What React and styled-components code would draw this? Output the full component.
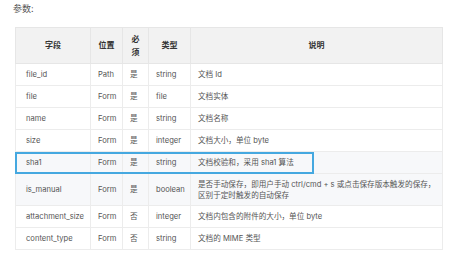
import React from 'react';
import styled, { createGlobalStyle } from 'styled-components';

const GlobalStyle = createGlobalStyle`
    body {
        margin: 0;
        background: #fff;
        font-family: "Inter", "Noto Sans CJK SC", sans-serif;
    }
`;

const Page = styled.div`
    padding: 3px 0 0 13px;
    width: 474px;
    height: 261px;
    box-sizing: border-box;
`;

const Title = styled.div`
    font-size: 9px;
    line-height: 12px;
    color: #555;
    margin-bottom: 12px;
`;

const TableWrap = styled.div`
    position: relative;
    margin-left: 2px;
    width: 428px;
`;

const Table = styled.table`
    border-collapse: collapse;
    table-layout: fixed;
    width: 428px;
    font-size: 7.6px;
    color: #555;
    border: 1px solid #ececec;
`;

const Th = styled.th`
    background: #f2f2f2;
    color: #333;
    font-weight: 600;
    font-size: 8px;
    text-align: center;
    height: 36px;
    padding: 0 6px;
    border: 1px solid #e6e6e6;
    line-height: 13px;
    box-sizing: border-box;
`;

const Td = styled.td`
    height: ${props => props.$tall ? 32 : 22}px;
    box-sizing: border-box;
    padding: 0 7px;
    padding-left: ${props => props.$first ? 10 : 7}px;
    line-height: 11px;
    white-space: ${props => props.$tall ? 'nowrap' : 'normal'};
    border: 1px solid #ececec;
    background: ${props => props.$shade ? '#f7f8fa' : '#fff'};
`;

// selection frame drawn over the sha1 row
const Highlight = styled.div`
    position: absolute;
    left: 0;
    top: 125px;
    width: 299px;
    height: 22px;
    border: 2px solid #45a8e0;
    box-sizing: border-box;
    pointer-events: none;
`;

const rows = [
    ['file_id', 'Path', '是', 'string', '文档 Id'],
    ['file', 'Form', '是', 'file', '文档实体'],
    ['name', 'Form', '是', 'string', '文档名称'],
    ['size', 'Form', '是', 'integer', '文档大小，单位 byte'],
    ['sha1', 'Form', '是', 'string', '文档校验和，采用 sha1 算法', true],
    ['is_manual', 'Form', '是', 'boolean', <>是否手动保存，即用户手动 ctrl/cmd + s 或点击保存版本触发的保存，<br />区别于定时触发的自动保存</>, true, true],
    ['attachment_size', 'Form', '否', 'integer', '文档内包含的附件的大小，单位 byte'],
    ['content_type', 'Form', '否', 'string', '文档的 MIME 类型'],
];

function App() {
    return (
        <Page>
            <GlobalStyle />
            <Title>参数:</Title>
            <TableWrap>
                <Table>
                    <colgroup>
                        <col style={{ width: 75 }} />
                        <col style={{ width: 32 }} />
                        <col style={{ width: 26 }} />
                        <col style={{ width: 42 }} />
                        <col />
                    </colgroup>
                    <thead>
                        <tr>
                            <Th>字段</Th>
                            <Th>位置</Th>
                            <Th>必须</Th>
                            <Th>类型</Th>
                            <Th>说明</Th>
                        </tr>
                    </thead>
                    <tbody>
                        {rows.map((row, index) => (
                            <tr key={index}>
                                {row.slice(0, 5).map((cell, i) => (
                                    <Td key={i} $first={i === 0} $shade={row[5]} $tall={row[6]}>{cell}</Td>
                                ))}
                            </tr>
                        ))}
                    </tbody>
                </Table>
                <Highlight />
            </TableWrap>
        </Page>
    );
}

export default App;
